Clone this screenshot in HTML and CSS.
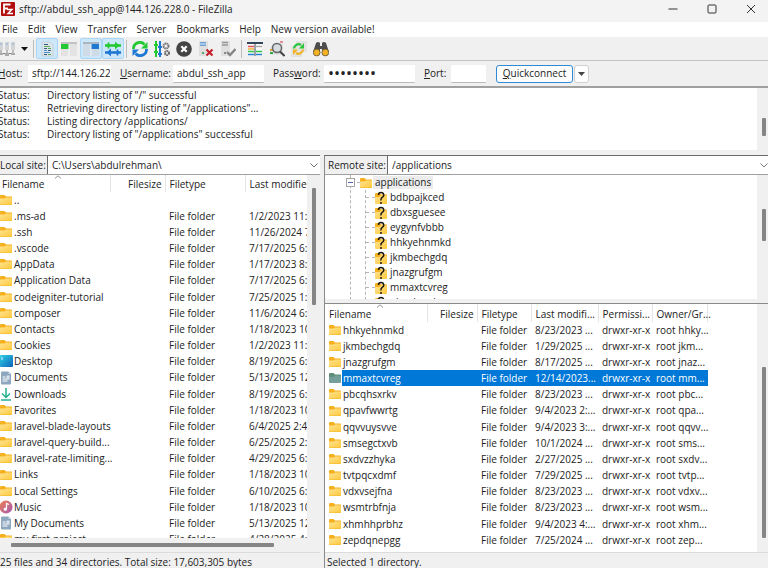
FILE: index.html
```html
<!DOCTYPE html>
<html lang="en">
<head>
    <meta charset="UTF-8">
    <meta name="viewport" content="width=device-width, initial-scale=1.0">
    <title>sftp://abdul_ssh_app@144.126.228.0 - FileZilla</title>
    <link rel="stylesheet" href="styles.css">
</head>
<body>
    <!-- Shared icons -->
    <svg class="sprite" aria-hidden="true">
        <defs>
            <linearGradient id="gold" x1="0" y1="0" x2="1" y2="1">
                <stop offset="0" stop-color="#ffe393"/>
                <stop offset="1" stop-color="#ffc93a"/>
            </linearGradient>
            <linearGradient id="sky" x1="0" y1="0" x2="1" y2="1">
                <stop offset="0" stop-color="#2fd0e4"/>
                <stop offset="1" stop-color="#0b63bb"/>
            </linearGradient>
            <linearGradient id="rose" x1="0" y1="0" x2="1" y2="1">
                <stop offset="0" stop-color="#f08050"/>
                <stop offset="1" stop-color="#a45ab4"/>
            </linearGradient>
        </defs>
        <symbol id="folder" viewBox="0 0 13 12">
            <path d="M0 2q0-1 1-1h3.500l1.500 1.500h5.500q.5 0 .5.500v3H0z" fill="#f5b01d"/>
            <path d="M0 4.500h4.500l1.500-1h6V10q0 1-1 1H1q-1 0-1-1z" fill="url(#gold)"/>
            <path d="M0 10.500h12" stroke="#f3b92c" stroke-width=".6"/>
        </symbol>
        <symbol id="folder-selected" viewBox="0 0 13 12">
            <path d="M0 2q0-1 1-1h3.500l1.500 1.500h5.500q.5 0 .5.500v3H0z" fill="#5f8d7a"/>
            <path d="M0 5h4.500l1.500-1.500h6V10q0 1-1 1H1q-1 0-1-1z" fill="#739e9a"/>
        </symbol>
        <symbol id="folder-unknown" viewBox="0 0 13 14">
            <path d="M0 3q0-1 1-1h3.500l1.500 1.500h6v3H0z" fill="#f5b01d"/>
            <path d="M0 6h4.500l1.500-1.500h6V12q0 1-1 1H1q-1 0-1-1z" fill="url(#gold)"/>
            <path d="M3.500 4Q3.500 1.500 6 1.500T8.800 4Q8.800 5.500 7.200 6.400T6 9.500" fill="none" stroke="#1c1a10" stroke-width="1.500"/>
            <circle cx="6" cy="12" r="1" fill="#1c1a10"/>
        </symbol>
        <symbol id="desktop" viewBox="0 0 13 12">
            <rect width="13" height="12" rx="1" fill="url(#sky)"/>
            <path d="M2 2v3" stroke="#fff" stroke-width=".8"/>
        </symbol>
        <symbol id="document" viewBox="0 0 13 14">
            <path d="M1 1.500Q1 .5 2 .5h6.500L11 3v9.500q0 1-1 1H2q-1 0-1-1z" fill="#8fa6bf"/>
            <path d="M8.500.5 11 3H8.500z" fill="#c7d4e2"/>
            <path d="M2.500 6h3M2.500 8h7M2.500 10h5" stroke="#fff"/>
            <path d="M6.500 4.500h3v3h-3z" fill="#dbe5ef"/>
        </symbol>
        <symbol id="download" viewBox="0 0 13 14">
            <path d="M6 1v9M2 6.500l4 4 4-4" fill="none" stroke="#25b090" stroke-width="1.500"/>
            <path d="M1 13h10" stroke="#25b090" stroke-width="1.500"/>
        </symbol>
        <symbol id="music" viewBox="0 0 13 14">
            <circle cx="6" cy="7" r="6.500" fill="url(#rose)"/>
            <path d="M6.500 9V3.500l2.500 1" fill="none" stroke="#fff" stroke-width="1.200"/>
            <circle cx="5.300" cy="9.200" r="1.600" fill="#fff"/>
        </symbol>
        <symbol id="chevron" viewBox="0 0 8 5">
            <path d="M.5.5 4 4 7.500.5" fill="none" stroke="#777"/>
        </symbol>
        <symbol id="sort-up" viewBox="0 0 8 4">
            <path d="M1 3.500 4 .8l3 2.700" fill="none" stroke="#777" stroke-width=".8"/>
        </symbol>
    </svg>

    <div class="app">
        <header class="titlebar">
            <svg class="logo" viewBox="0 0 14 14">
                <rect width="14" height="14" rx="1" fill="#b30c0c"/>
                <path d="M3 11.500V2.500h6.500M3 6.500h4" fill="none" stroke="#fff" stroke-width="1.800"/>
                <path d="M6 7.500h5L7 11.500h5" fill="none" stroke="#fff" stroke-width="1.400"/>
            </svg>
            <h1>sftp://abdul_ssh_app@144.126.228.0 - FileZilla</h1>
            <div class="window-controls">
                <button type="button" aria-label="Minimize"><svg viewBox="0 0 10 10"><path d="M.5 5h9" stroke="#333"/></svg></button>
                <button type="button" aria-label="Maximize"><svg viewBox="0 0 10 10"><rect x="1" y="1" width="8" height="8" rx="1" fill="none" stroke="#333"/></svg></button>
                <button type="button" aria-label="Close"><svg viewBox="0 0 10 10"><path d="m1 1 8 8M9 1 1 9" stroke="#333"/></svg></button>
            </div>
        </header>

        <nav class="menubar">
            <button type="button">File</button>
            <button type="button">Edit</button>
            <button type="button">View</button>
            <button type="button">Transfer</button>
            <button type="button">Server</button>
            <button type="button">Bookmarks</button>
            <button type="button">Help</button>
            <button type="button">New version available!</button>
        </nav>

        <div class="toolbar">
            <button type="button" class="first" aria-label="Site Manager">
                <svg viewBox="0 0 16 16"><path d="M0 1h4v8H0zM6 1h4v8H6zM12 1h4v8h-4z" fill="#d2d5d8"/><path d="M1 3h2M7 3h2M13 3h2" stroke="#8db0cf"/><path d="M2 9v3.500h12V9M8 9v5" fill="none" stroke="#858585"/><path d="M0 12h4v2H0zM6 12h4v3H6zM12 12h4v2h-4z" fill="#aaa"/></svg>
            </button>
            <button type="button" class="caret" aria-label="Site list">
                <svg viewBox="0 0 7 4"><path d="M0 0h7L3.500 4z" fill="#111"/></svg>
            </button>
            <span class="separator"></span>
            <button type="button" class="on" aria-label="Message log">
                <svg viewBox="0 0 16 16"><path d="M3 1h8l3 3v11H3z" fill="#dce5ea" stroke="#b9c5cc" stroke-width=".6"/><path d="M5 3.500h4M5 7.500h3M9 9.500h3M5 13.500h3" stroke="#37597a"/><path d="M5 5.500h6M9 7.500h3M9 13.500h3" stroke="#5ba95d"/><path d="M5 9.500h3M5 11.500h6" stroke="#4a90d0"/></svg>
            </button>
            <button type="button" aria-label="Local tree">
                <svg viewBox="0 0 16 16"><path d="M0 1h16v14H0z" fill="#e3e3e3"/><path d="M0 1h16v2H0z" fill="#c3c3c3"/><path d="M0 3h8v5H0z" fill="#24c932"/><path d="M8 3v12" stroke="#fafafa"/></svg>
            </button>
            <button type="button" class="on" aria-label="Remote tree">
                <svg viewBox="0 0 16 16"><path d="M0 1h16v14H0z" fill="#cfdbe6"/><path d="M0 1h16v2H0z" fill="#a9b5c0"/><path d="M8 3h8v5H8z" fill="#1f78d2"/><path d="M8 3v12" stroke="#edf5fb"/></svg>
            </button>
            <button type="button" class="on" aria-label="Transfer queue">
                <svg viewBox="0 0 16 16"><path d="M0 3.200h16v2.600H0z" fill="#25c933"/><path d="M10 .5v8l4.500-4z" fill="#25c933"/><path d="M0 10.200h16v2.600H0z" fill="#1f78d2"/><path d="M6 7.500v8l-4.500-4z" fill="#1f78d2"/><path d="M3.500 1.500v6" stroke="#25c933" stroke-width="1.800"/><path d="M12.500 8.500v6" stroke="#1f78d2" stroke-width="1.800"/></svg>
            </button>
            <span class="separator"></span>
            <button type="button" aria-label="Refresh">
                <svg viewBox="0 0 16 16"><path d="M1.500 8A6.300 6.300 0 0 1 12.500 3.500" fill="none" stroke="#25c933" stroke-width="2.800"/><path d="M15.500 1v6.500H9z" fill="#25c933"/><path d="M14.500 8A6.300 6.300 0 0 1 3.500 12.500" fill="none" stroke="#1f78d2" stroke-width="2.800"/><path d="M.5 15V8.500H7z" fill="#1f78d2"/></svg>
            </button>
            <button type="button" aria-label="Process queue">
                <svg viewBox="0 0 16 16"><path d="M2 0v16" stroke="#25c933" stroke-width="2"/><path d="M6 0v16" stroke="#1f78d2" stroke-width="2"/><path d="M0 4h4M0 11h4" stroke="#25c933" stroke-width="2"/><path d="M4 6h4M4 13h4" stroke="#1f78d2" stroke-width="2"/><circle cx="12" cy="5" r="2.500" fill="none" stroke="#757575" stroke-width="2" stroke-dasharray="1.500 .5"/><circle cx="13" cy="12" r="2" fill="none" stroke="#666" stroke-width="2" stroke-dasharray="1.500 .5"/></svg>
            </button>
            <button type="button" aria-label="Cancel">
                <svg viewBox="0 0 16 16"><circle cx="8" cy="8" r="7.800" fill="#444"/><path d="m5.300 5.300 5.400 5.400m0-5.400-5.400 5.400" stroke="#fff" stroke-width="2.200"/></svg>
            </button>
            <button type="button" aria-label="Disconnect">
                <svg viewBox="0 0 16 16"><path d="M1 0h9v15H1z" fill="#dfdfdf"/><path d="M2 1h6v4H2z" fill="#6ea3d8"/><path d="M2 3h6" stroke="#d8e7f5"/><path d="M4 12h2" stroke="#57a664" stroke-width="2"/><path d="m8.500 8.500 6 6m0-6-6 6" stroke="#c5202b" stroke-width="2.200"/></svg>
            </button>
            <button type="button" aria-label="Reconnect">
                <svg viewBox="0 0 16 16"><path d="M1 0h9v15H1z" fill="#dfdfdf"/><path d="M2 1.500h6M2 4h6" stroke="#999" stroke-width="1.500"/><path d="M4 12h2" stroke="#888" stroke-width="2"/><path d="m7 11 3 3 5.500-6" fill="none" stroke="#858585" stroke-width="2.400"/></svg>
            </button>
            <span class="separator"></span>
            <button type="button" aria-label="Filter">
                <svg viewBox="0 0 16 16"><path d="M1 2h14v13H1z" fill="#fafafa"/><path d="M0 2h16" stroke="#30465c" stroke-width="2"/><path d="M1 5.500h6" stroke="#e65050" stroke-width="1.500"/><path d="M9 5.500h6" stroke="#aaa" stroke-width="1.500"/><path d="M1 8h6" stroke="#efb23c" stroke-width="1.500"/><path d="M1 10.500h6M9 10.500h6" stroke="#2dc64a" stroke-width="1.500"/><path d="M1 13.500h6M9 13.500h6" stroke="#2780d0" stroke-width="1.500"/><path d="M8 2v13" stroke="#37475a"/></svg>
            </button>
            <button type="button" aria-label="Search">
                <svg viewBox="0 0 16 16"><path d="M4 2h10v12H1V8z" fill="#e2e2e2"/><path d="M11 1h3" stroke="#d33"/><path d="M1 9h3" stroke="#e0a43a" stroke-width="2"/><path d="M1 12h3" stroke="#32aa48" stroke-width="2"/><circle cx="8" cy="7" r="4.500" fill="#d6dee4" stroke="#666" stroke-width="1.500"/><path d="m11 10.500 4.500 4.500" stroke="#444" stroke-width="2"/></svg>
            </button>
            <button type="button" aria-label="Compare">
                <svg viewBox="0 0 16 16"><path d="M5 0h11v11H5zM0 5h11v11H0z" fill="#e2e2e2"/><path d="M3 7.500A4.500 4.500 0 0 1 10 4" fill="none" stroke="#28c43a" stroke-width="2.200"/><path d="M13 2v5.500H8z" fill="#28c43a"/><path d="M12 8.500A4.500 4.500 0 0 1 5 12" fill="none" stroke="#f0b323" stroke-width="2.200"/><path d="M2 14V8.500h5z" fill="#f0b323"/></svg>
            </button>
            <button type="button" aria-label="Find files">
                <svg viewBox="0 0 16 16"><path d="M3 2q2-2 4 0v3h2V2q2-2 4 0l3 9H9V8H7v3H0z" fill="#4d4d4d"/><circle cx="3.700" cy="11.500" r="3.400" fill="#f4b224" stroke="#5b5037" stroke-width=".8"/><circle cx="12.300" cy="11.500" r="3.400" fill="#f4b224" stroke="#5b5037" stroke-width=".8"/></svg>
            </button>
        </div>

        <form class="quickconnect">
            <label for="host"><u>H</u>ost:</label>
            <input type="text" id="host" value="sftp://144.126.228.0">
            <label for="username"><u>U</u>sername:</label>
            <input type="text" id="username" value="abdul_ssh_app">
            <label for="password">Pass<u>w</u>ord:</label>
            <input type="password" id="password" value="12345678">
            <label for="port"><u>P</u>ort:</label>
            <input type="text" id="port">
            <button type="button" class="connect"><u>Q</u>uickconnect</button>
            <button type="button" class="history" aria-label="Recent servers"><svg viewBox="0 0 7 4"><path d="M0 0h7L3.500 4z" fill="#444"/></svg></button>
        </form>

        <section class="log">
            <dl>
                <dt>Status:</dt><dd>Directory listing of "/" successful</dd>
                <dt>Status:</dt><dd>Retrieving directory listing of "/applications"...</dd>
                <dt>Status:</dt><dd>Listing directory /applications/</dd>
                <dt>Status:</dt><dd>Directory listing of "/applications" successful</dd>
            </dl>
            <div class="scrollbar"><span class="thumb log-thumb"></span></div>
        </section>

        <main class="panes">
            <section class="pane local">
                <div class="site">
                    <label for="local-site">Local site:</label>
                    <div class="combo">
                        <select id="local-site"><option>C:\Users\abdulrehman\</option></select>
                        <svg><use href="#chevron"/></svg>
                    </div>
                </div>
                <div class="list">
                    <div class="view">
                        <table>
                            <colgroup><col class="name"><col class="size"><col class="type"><col class="date"></colgroup>
                            <thead>
                                <tr><th>Filename<svg class="sort"><use href="#sort-up"/></svg></th><th class="right">Filesize</th><th>Filetype</th><th>Last modified</th></tr>
                            </thead>
                            <tbody>
                                <tr><td><div class="file"><svg><use href="#folder"/></svg><span>..</span></div></td><td></td><td></td><td></td></tr>
                                <tr><td><div class="file"><svg><use href="#folder"/></svg><span>.ms-ad</span></div></td><td></td><td>File folder</td><td>1/2/2023 11:43:10</td></tr>
                                <tr><td><div class="file"><svg><use href="#folder"/></svg><span>.ssh</span></div></td><td></td><td>File folder</td><td>11/26/2024 7:12:05</td></tr>
                                <tr><td><div class="file"><svg><use href="#folder"/></svg><span>.vscode</span></div></td><td></td><td>File folder</td><td>7/17/2025 6:41:22</td></tr>
                                <tr><td><div class="file"><svg><use href="#folder"/></svg><span>AppData</span></div></td><td></td><td>File folder</td><td>1/17/2023 8:15:40</td></tr>
                                <tr><td><div class="file"><svg><use href="#folder"/></svg><span>Application Data</span></div></td><td></td><td>File folder</td><td>7/17/2025 6:41:30</td></tr>
                                <tr><td><div class="file"><svg><use href="#folder"/></svg><span>codeigniter-tutorial</span></div></td><td></td><td>File folder</td><td>7/25/2025 1:20:18</td></tr>
                                <tr><td><div class="file"><svg><use href="#folder"/></svg><span>composer</span></div></td><td></td><td>File folder</td><td>11/6/2024 6:02:11</td></tr>
                                <tr><td><div class="file"><svg><use href="#folder"/></svg><span>Contacts</span></div></td><td></td><td>File folder</td><td>1/18/2023 10:05:32</td></tr>
                                <tr><td><div class="file"><svg><use href="#folder"/></svg><span>Cookies</span></div></td><td></td><td>File folder</td><td>1/2/2023 11:38:51</td></tr>
                                <tr><td><div class="file"><svg><use href="#desktop"/></svg><span>Desktop</span></div></td><td></td><td>File folder</td><td>8/19/2025 6:03:27</td></tr>
                                <tr><td><div class="file"><svg><use href="#document"/></svg><span>Documents</span></div></td><td></td><td>File folder</td><td>5/13/2025 12:24:16</td></tr>
                                <tr><td><div class="file"><svg><use href="#download"/></svg><span>Downloads</span></div></td><td></td><td>File folder</td><td>8/19/2025 6:20:44</td></tr>
                                <tr><td><div class="file"><svg><use href="#folder"/></svg><span>Favorites</span></div></td><td></td><td>File folder</td><td>1/18/2023 10:05:32</td></tr>
                                <tr><td><div class="file"><svg><use href="#folder"/></svg><span>laravel-blade-layouts</span></div></td><td></td><td>File folder</td><td>6/4/2025 2:44:09</td></tr>
                                <tr><td><div class="file"><svg><use href="#folder"/></svg><span>laravel-query-build...</span></div></td><td></td><td>File folder</td><td>6/25/2025 2:31:55</td></tr>
                                <tr><td><div class="file"><svg><use href="#folder"/></svg><span>laravel-rate-limiting...</span></div></td><td></td><td>File folder</td><td>4/29/2025 6:42:13</td></tr>
                                <tr><td><div class="file"><svg><use href="#folder"/></svg><span>Links</span></div></td><td></td><td>File folder</td><td>1/18/2023 10:05:33</td></tr>
                                <tr><td><div class="file"><svg><use href="#folder"/></svg><span>Local Settings</span></div></td><td></td><td>File folder</td><td>6/10/2025 6:17:48</td></tr>
                                <tr><td><div class="file"><svg><use href="#music"/></svg><span>Music</span></div></td><td></td><td>File folder</td><td>1/18/2023 10:05:32</td></tr>
                                <tr><td><div class="file"><svg><use href="#document"/></svg><span>My Documents</span></div></td><td></td><td>File folder</td><td>5/13/2025 12:24:16</td></tr>
                                <tr><td><div class="file"><svg><use href="#folder"/></svg><span>my-first-project</span></div></td><td></td><td>File folder</td><td>4/28/2025 4:10:02</td></tr>
                            </tbody>
                        </table>
                    </div>
                    <div class="scrollbar"><span class="thumb local-thumb"></span></div>
                </div>
                <div class="scrollbar-x"><span class="thumb"></span></div>
                <footer>25 files and 34 directories. Total size: 17,603,305 bytes</footer>
            </section>

            <section class="pane remote">
                <div class="site">
                    <label for="remote-site">Remote site:</label>
                    <div class="combo">
                        <select id="remote-site"><option>/applications</option></select>
                        <svg><use href="#chevron"/></svg>
                    </div>
                </div>
                <div class="tree">
                    <div class="view">
                        <ul class="root">
                            <li class="open">
                                <svg class="toggle" viewBox="0 0 9 9"><rect x=".5" y=".5" width="8" height="8" fill="#fff" stroke="#a5a5a5"/><path d="M2 4.500h5" stroke="#4b63a7"/></svg>
                                <svg><use href="#folder"/></svg><span>applications</span>
                            </li>
                            <li>
                                <ul>
                                    <li><svg><use href="#folder-unknown"/></svg><span>bdbpajkced</span></li>
                                    <li><svg><use href="#folder-unknown"/></svg><span>dbxsguesee</span></li>
                                    <li><svg><use href="#folder-unknown"/></svg><span>eygynfvbbb</span></li>
                                    <li><svg><use href="#folder-unknown"/></svg><span>hhkyehnmkd</span></li>
                                    <li><svg><use href="#folder-unknown"/></svg><span>jkmbechgdq</span></li>
                                    <li><svg><use href="#folder-unknown"/></svg><span>jnazgrufgm</span></li>
                                    <li><svg><use href="#folder-unknown"/></svg><span>mmaxtcvreg</span></li>
                                    <li><svg><use href="#folder-unknown"/></svg><span>pbcqhsxrkv</span></li>
                                </ul>
                            </li>
                        </ul>
                    </div>
                    <div class="scrollbar"><span class="thumb tree-thumb"></span></div>
                </div>
                <div class="list">
                    <div class="view">
                        <table>
                            <colgroup><col class="name"><col class="size"><col class="type"><col class="date"><col class="perm"><col class="owner"></colgroup>
                            <thead>
                                <tr><th>Filename<svg class="sort"><use href="#sort-up"/></svg></th><th class="right">Filesize</th><th>Filetype</th><th>Last modifi...</th><th>Permissi...</th><th>Owner/Gr...</th></tr>
                            </thead>
                            <tbody>
                                <tr><td><div class="file"><svg><use href="#folder"/></svg><span>hhkyehnmkd</span></div></td><td></td><td>File folder</td><td>8/23/2023 ...</td><td>drwxr-xr-x</td><td>root hhky...</td></tr>
                                <tr><td><div class="file"><svg><use href="#folder"/></svg><span>jkmbechgdq</span></div></td><td></td><td>File folder</td><td>1/29/2025 ...</td><td>drwxr-xr-x</td><td>root jkm...</td></tr>
                                <tr><td><div class="file"><svg><use href="#folder"/></svg><span>jnazgrufgm</span></div></td><td></td><td>File folder</td><td>8/17/2025 ...</td><td>drwxr-xr-x</td><td>root jnaz...</td></tr>
                                <tr class="selected"><td><div class="file"><svg><use href="#folder-selected"/></svg><span>mmaxtcvreg</span></div></td><td></td><td>File folder</td><td>12/14/2023...</td><td>drwxr-xr-x</td><td>root mm...</td></tr>
                                <tr><td><div class="file"><svg><use href="#folder"/></svg><span>pbcqhsxrkv</span></div></td><td></td><td>File folder</td><td>8/23/2023 ...</td><td>drwxr-xr-x</td><td>root pbc...</td></tr>
                                <tr><td><div class="file"><svg><use href="#folder"/></svg><span>qpavfwwrtg</span></div></td><td></td><td>File folder</td><td>9/4/2023 2:...</td><td>drwxr-xr-x</td><td>root qpa...</td></tr>
                                <tr><td><div class="file"><svg><use href="#folder"/></svg><span>qqvvuysvve</span></div></td><td></td><td>File folder</td><td>9/4/2023 3:...</td><td>drwxr-xr-x</td><td>root qqvv...</td></tr>
                                <tr><td><div class="file"><svg><use href="#folder"/></svg><span>smsegctxvb</span></div></td><td></td><td>File folder</td><td>10/1/2024 ...</td><td>drwxr-xr-x</td><td>root sms...</td></tr>
                                <tr><td><div class="file"><svg><use href="#folder"/></svg><span>sxdvzzhyka</span></div></td><td></td><td>File folder</td><td>2/27/2025 ...</td><td>drwxr-xr-x</td><td>root sxdv...</td></tr>
                                <tr><td><div class="file"><svg><use href="#folder"/></svg><span>tvtpqcxdmf</span></div></td><td></td><td>File folder</td><td>7/29/2025 ...</td><td>drwxr-xr-x</td><td>root tvtp...</td></tr>
                                <tr><td><div class="file"><svg><use href="#folder"/></svg><span>vdxvsejfna</span></div></td><td></td><td>File folder</td><td>8/23/2023 ...</td><td>drwxr-xr-x</td><td>root vdxv...</td></tr>
                                <tr><td><div class="file"><svg><use href="#folder"/></svg><span>wsmtrbfnja</span></div></td><td></td><td>File folder</td><td>8/23/2023 ...</td><td>drwxr-xr-x</td><td>root wsm...</td></tr>
                                <tr><td><div class="file"><svg><use href="#folder"/></svg><span>xhmhhprbhz</span></div></td><td></td><td>File folder</td><td>9/4/2023 4:...</td><td>drwxr-xr-x</td><td>root xhm...</td></tr>
                                <tr><td><div class="file"><svg><use href="#folder"/></svg><span>zepdqnepgg</span></div></td><td></td><td>File folder</td><td>7/25/2024 ...</td><td>drwxr-xr-x</td><td>root zep...</td></tr>
                            </tbody>
                        </table>
                    </div>
                    <div class="scrollbar"><span class="thumb remote-thumb"></span></div>
                </div>
                <footer>Selected 1 directory.</footer>
            </section>
        </main>
    </div>
</body>
</html>
```
FILE: styles.css
```css
* {
    box-sizing: border-box;
}

body {
    margin: 0;
    overflow: hidden;
    background-color: #f0f0f0;
    color: #222;
    font-family: "Open Sans", "Noto Sans", sans-serif;
    font-size: 10px;
    line-height: 13px;
}

button,
input,
select {
    margin: 0;
    padding: 0;
    border: 0;
    background: none;
    color: inherit;
    font: inherit;
}

.sprite {
    position: absolute;
    width: 0;
    height: 0;
}

/* The window frame sits just outside the viewport */
.app {
    display: flex;
    flex-direction: column;
    height: 100vh;
    margin: 0 -2px;
}

/* Title bar */
.titlebar {
    display: flex;
    align-items: center;
    height: 22px;
    padding: 0 0 4px 3px;
    background-color: #f3f3f3;
}

.titlebar h1 {
    flex: 1;
    margin: 0 0 0 4px;
    font-size: 10px;
    font-weight: normal;
}

.logo {
    width: 14px;
    height: 14px;
}

.window-controls {
    display: flex;
}

.window-controls button {
    display: flex;
    justify-content: center;
    width: 39px;
}

.window-controls svg {
    width: 10px;
    height: 10px;
}

/* Menu */
.menubar {
    display: flex;
    align-items: center;
    gap: 10px;
    height: 15px;
    padding-left: 4px;
    background-color: #fff;
}

/* Toolbar */
.toolbar {
    display: flex;
    align-items: center;
    height: 24px;
    border-bottom: 1px solid #c4c4c4;
}

.toolbar button {
    display: flex;
    align-items: center;
    justify-content: center;
    width: 22px;
    height: 21px;
    border-radius: 2px;
}

.toolbar svg {
    flex: none;
    width: 16px;
    height: 16px;
}

.toolbar .first {
    margin-left: -2px;
}

.toolbar .caret {
    width: 13px;
}

.toolbar .caret svg {
    width: 7px;
    height: 4px;
}

.toolbar .on {
    border: 1px solid #a9d6f7;
    background-color: #cce6fa;
}

.separator {
    width: 1px;
    height: 18px;
    margin: 0 2px;
    background-color: #bdbdbd;
}

/* Quickconnect */
.quickconnect {
    display: grid;
    grid-template-columns: 30px 83px 62px 91px 60px 91px 36px 35px 77px 15px;
    align-items: center;
    height: 27px;
    border-bottom: 2px solid #a0a0a0;
}

.quickconnect label {
    padding-left: 9px;
}

.quickconnect label:first-child {
    padding-left: 0;
}

.quickconnect input {
    width: 100%;
    height: 18px;
    padding: 0 1px 0 4px;
    border-bottom: 1px solid #bbb;
    border-radius: 1px;
    background-color: #fff;
}

.quickconnect input[type="password"] {
    font-size: 16px;
}

.quickconnect button {
    height: 18px;
    border-radius: 3px;
    background-color: #fdfdfd;
}

.quickconnect .connect {
    margin: 0 -10px 0 10px;
    border: 1px solid #2f8ad6;
}

.quickconnect .history {
    display: flex;
    align-items: center;
    justify-content: center;
    margin: 0 -11px 0 11px;
    border: 1px solid #d0d0d0;
}

.history svg {
    width: 7px;
    height: 4px;
}

/* Message log */
.log {
    display: flex;
    height: 62px;
    margin-bottom: 5px;
    background-color: #fff;
}

.log dl {
    display: grid;
    flex: 1;
    grid-template-columns: 49px 1fr;
    align-content: start;
    margin: 0;
    padding-top: 1px;
}

.log dd {
    margin: 0;
}

/* Scrollbars */
.scrollbar {
    display: flex;
    flex: none;
    justify-content: center;
    width: 13px;
    background-color: #f0f0f0;
}

.thumb {
    border-radius: 1px;
    background-color: #858585;
}

.scrollbar .thumb {
    width: 4px;
}

.log-thumb {
    height: 18px;
    margin-top: 30px;
}

.local-thumb {
    height: 117px;
    margin-top: 13px;
}

.tree-thumb {
    height: 32px;
    margin-top: 34px;
}

.remote-thumb {
    height: 171px;
    margin-top: 63px;
}

.scrollbar-x {
    display: flex;
    align-items: center;
    height: 14px;
    padding: 0 46px 0 13px;
}

.scrollbar-x .thumb {
    flex: 1;
    height: 4px;
}

/* Panes */
.panes {
    display: grid;
    flex: 1;
    grid-template-columns: 161fr 223fr;
    gap: 4px;
    min-height: 0;
}

.pane {
    display: flex;
    flex-direction: column;
    min-width: 0;
    min-height: 0;
    border-top: 1px solid #6b6b6b;
}

.remote {
    border-left: 1px solid #8a8a8a;
}

.site {
    display: flex;
    flex: none;
    height: 19px;
    border-bottom: 1px solid #a0a0a0;
}

.site label {
    flex: none;
    width: 50px;
    padding: 3px 0 0 2px;
    border-right: 1px solid #6b6b6b;
    white-space: nowrap;
}

.remote .site label {
    width: 63px;
    padding-left: 3px;
}

.combo {
    position: relative;
    flex: 1;
}

.combo select {
    width: 100%;
    height: 100%;
    padding-left: 4px;
    background-color: #fff;
    appearance: none;
}

.combo svg {
    position: absolute;
    top: 7px;
    right: 2px;
    width: 8px;
    height: 5px;
    pointer-events: none;
}

.view {
    flex: 1;
    overflow: hidden;
    background-color: #fff;
}

footer {
    flex: none;
    height: 16px;
    padding: 3px 2px 0;
    border-top: 1px solid #dcdcdc;
    white-space: nowrap;
}

/* File lists */
.list {
    display: flex;
    flex: 1;
    min-height: 0;
}

table {
    width: 352px;
    border-collapse: collapse;
    table-layout: fixed;
    white-space: nowrap;
}

.remote table {
    width: 383px;
}

.name {
    width: 112px;
}

.size {
    width: 55px;
}

.type {
    width: 80px;
}

.remote .name {
    width: 102px;
}

.remote .size {
    width: 50px;
}

.remote .type,
.perm {
    width: 54px;
}

.remote .date {
    width: 67px;
}

th,
td {
    height: 16px;
    padding: 0 0 0 4px;
    text-align: left;
}

th {
    position: relative;
    height: 17px;
    padding-top: 2px;
    border-right: 1px solid #e5e5e5;
    font-weight: normal;
}

.remote th {
    height: 18px;
}

.right {
    padding-right: 3px;
    text-align: right;
}

.sort {
    position: absolute;
    top: 0;
    left: 50%;
    width: 8px;
    height: 4px;
}

tr:nth-child(6n) td {
    height: 17px;
}

.local td:first-child {
    padding-left: 2px;
}

.file {
    display: flex;
    align-items: center;
    height: 16px;
}

.file svg {
    flex: none;
    width: 13px;
    height: 14px;
}

.file span {
    flex: 1;
    padding-left: 1px;
}

.selected td:not(:first-child),
.selected span {
    background-color: #0078d7;
    color: #fff;
}

.selected span {
    line-height: 16px;
}

/* Remote tree */
.tree {
    display: flex;
    flex: 0 0 124px;
    min-height: 0;
    margin-bottom: 4px;
    overflow: hidden;
}

.remote .list {
    border-top: 1px solid #8a8a8a;
}

.tree ul {
    margin: 0 0 0 14px;
    padding: 0;
    border-left: 1px dashed #b5b5b5;
    list-style: none;
}

.tree .root {
    margin-left: 25px;
}

.tree ul ul li,
.open {
    position: relative;
    display: flex;
    align-items: center;
    height: 15px;
}

.tree ul ul li::before,
.open::before {
    width: 9px;
    border-top: 1px dashed #b5b5b5;
    content: "";
}

.tree svg {
    width: 13px;
    height: 14px;
}

.tree span {
    padding: 0 2px;
}

.tree .toggle {
    position: absolute;
    left: -5px;
    width: 9px;
    height: 9px;
}

.open span {
    background-color: #ececec;
}
```
